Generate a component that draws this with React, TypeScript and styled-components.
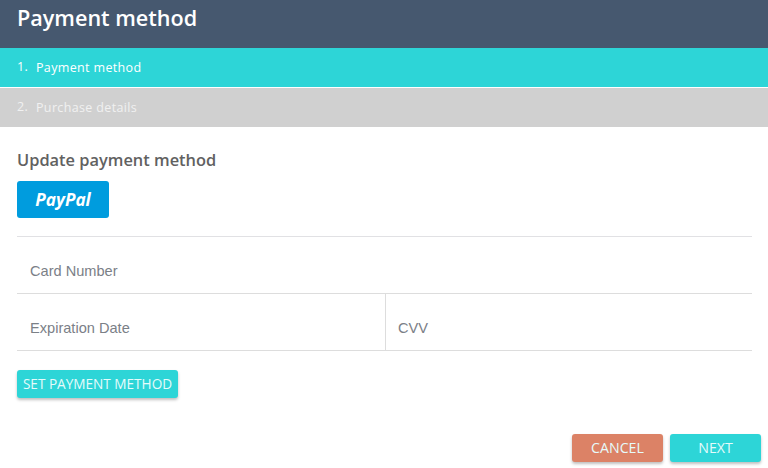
import React from "react";
import styled, { createGlobalStyle } from "styled-components";

const Global = createGlobalStyle`
  html, body { margin: 0; padding: 0; background: #fff; }
  body { width: 768px; height: 468px; overflow: hidden; font-family: "Open Sans", "Noto Sans", sans-serif; }
  * { box-sizing: border-box; }
`;

const Page = styled.div`
  width: 768px;
  height: 468px;
  display: flex;
  flex-direction: column;
`;

const Header = styled.header`
  height: 48px;
  background: #46586f;
  color: #fff;
  padding: 5px 0 0 17px;
  font-size: 21.6px;
  line-height: 26px;
  font-weight: 600;
`;

const Step = styled.div<{ $active?: boolean }>`
  height: 39px;
  margin-bottom: ${(p) => (p.$active ? 1 : 0)}px;
  display: flex;
  align-items: center;
  padding-left: 17px;
  background: ${(p) => (p.$active ? "#2dd5d7" : "#d0d0d0")};
  color: ${(p) => (p.$active ? "#fff" : "#f1f1f1")};
  font-size: 12.5px;
  font-weight: 400;
  letter-spacing: 0.35px;
`;

const StepNumber = styled.span`
  width: 19px;
  margin-top: -2px;
`;

const Content = styled.main`
  flex: 1;
  display: flex;
  flex-direction: column;
  padding: 23px 16px 0 17px;
`;

const Title = styled.h2`
  margin: 0;
  color: #616161;
  font-size: 16.4px;
  line-height: 20px;
  font-weight: 600;
`;

const PayPalButton = styled.button`
  width: 92px;
  height: 37px;
  margin-top: 11px;
  border: 0;
  border-radius: 3px;
  background: #009cde;
  color: #fff;
  font-family: "Open Sans", sans-serif;
  font-size: 17.2px;
  font-style: italic;
  font-weight: 700;
  padding: 0;
`;

const Form = styled.div`
  margin-top: 18px;
  border-top: 1px solid #e1e1e4;
`;

const FieldRow = styled.div`
  display: flex;
  height: 57px;
  border-bottom: 1px solid #dddddd;
`;

const Field = styled.div<{ $divided?: boolean }>`
  flex: 1;
  display: flex;
  align-items: center;
  padding-left: ${(p) => (p.$divided ? 12 : 13)}px;
  padding-top: 12px;
  border-left: ${(p) => (p.$divided ? "1px solid #dddddd" : "0")};
  color: #7b8087;
  font-family: "Liberation Sans", Arial, sans-serif;
  font-size: 14.6px;
`;

const FirstField = styled(Field)`
  flex: 0 0 368px;
`;

const ActionButton = styled.button<{ $bg: string; $w: number }>`
  width: ${(p) => p.$w}px;
  height: 28px;
  border: 0;
  border-radius: 3px;
  background: ${(p) => p.$bg};
  color: #e6fbfb;
  box-shadow: 0 2px 3px rgba(0, 0, 0, 0.25);
  font-family: "Open Sans", sans-serif;
  font-size: 14.2px;
  font-weight: 500;
  padding: 0 0 2px;
  white-space: nowrap;
`;

const SetButton = styled(ActionButton)`
  margin-top: 19px;
  font-size: 13.6px;
`;

const Footer = styled.footer`
  display: flex;
  justify-content: flex-end;
  gap: 7px;
  margin-top: 36px;
  margin-right: -9px;
`;

export default function App() {
  return (
    <Page>
      <Global />
      <Header>Payment method</Header>
      <Step $active><StepNumber>1.</StepNumber>Payment method</Step>
      <Step><StepNumber>2.</StepNumber>Purchase details</Step>
      <Content>
        <Title>Update payment method</Title>
        <PayPalButton>PayPal</PayPalButton>
        <Form>
          <FieldRow><Field>Card Number</Field></FieldRow>
          <FieldRow><FirstField>Expiration Date</FirstField><Field $divided>CVV</Field></FieldRow>
        </Form>
        <SetButton $bg="#2dd5d7" $w={161}>SET PAYMENT METHOD</SetButton>
        <Footer>
          <ActionButton $bg="#dc8266" $w={91}>CANCEL</ActionButton>
          <ActionButton $bg="#2dd5d7" $w={91}>NEXT</ActionButton>
        </Footer>
      </Content>
    </Page>
  );
}
